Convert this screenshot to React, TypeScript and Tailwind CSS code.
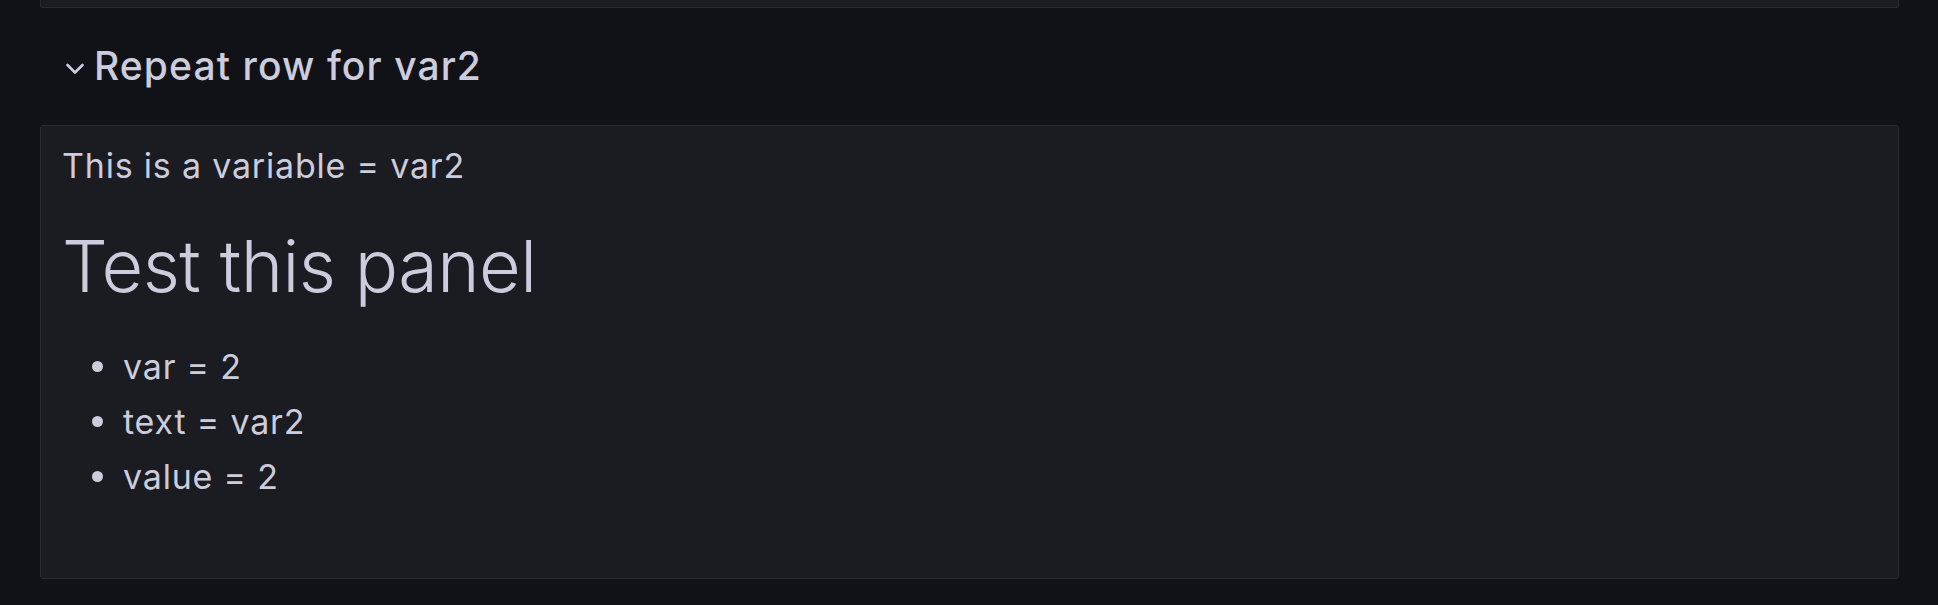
import React from 'react';

const items = ['var = 2', 'text = var2', 'value = 2'];

function Chevron() {
    return (
        <svg width="20" height="14" viewBox="0 0 20 14" fill="none" className="shrink-0 mt-[16px]">
            <path d="M2.5 3 L10 10.5 L17.5 3" stroke="#ccccdc" strokeWidth="2.6" strokeLinecap="round" strokeLinejoin="round" />
        </svg>
    );
}

export default function App() {
    return (
        <div className="w-full h-[605px] overflow-hidden bg-[#111217] pl-[40px] pr-[39px] font-['Inter','Noto_Sans',sans-serif] text-[#ccccdc]">
            {/* tail of previous panel */}
            <div className="h-[8px] bg-[#1b1c21] border-x border-b border-[#2a2b30] rounded-b-[3px]" />

            {/* Row header */}
            <div className="h-[117px] pt-[38px] pl-[25px] flex items-start gap-[9px]">
                <Chevron />
                <span className="text-[39px] leading-[39px] font-medium tracking-[1.1px]">Repeat row for var2</span>
            </div>

            {/* Text panel */}
            <div className="h-[454px] bg-[#1b1c21] border border-[#2a2b30] rounded-[3px] pt-[15px] pl-[21px]">
                <p className="text-[34px] leading-[50.4px] tracking-[0.8px]">This is a variable = var2</p>
                <h1 className="mt-[32px] text-[72px] leading-[86.4px] font-light tracking-[-0.6px]">Test this panel</h1>
                <ul className="mt-[29px] pl-[30px]">
                    {items.map((item) => (
                        <li key={item} className="h-[55px] flex items-center gap-[20px] text-[34px] leading-[55px] tracking-[0.8px]">
                            <span className="w-[11px] h-[11px] rounded-full bg-[#ccccdc] shrink-0" />
                            {item}
                        </li>
                    ))}
                </ul>
            </div>
        </div>
    );
}
